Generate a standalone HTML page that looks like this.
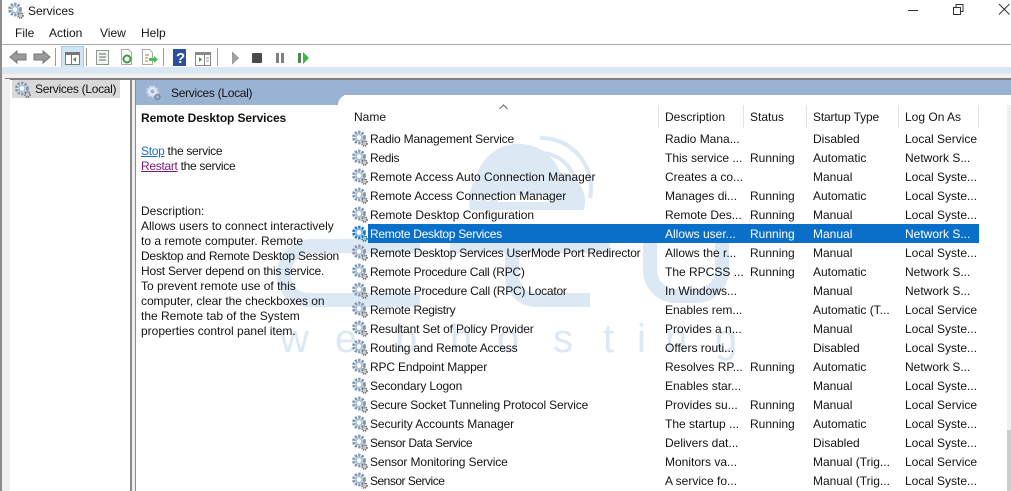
<!DOCTYPE html>
<html><head><meta charset="utf-8"><style>
html,body{margin:0;padding:0}
body{width:1011px;height:491px;overflow:hidden;background:#fff;position:relative;font-family:"Liberation Sans",sans-serif;font-size:12px;color:#141414}
.a{position:absolute;white-space:nowrap}
.r{position:absolute;left:0;width:1011px;height:19px;line-height:19px}
.r span{position:absolute;top:0;white-space:nowrap}
.r svg{position:absolute;left:351px;top:0}
.n{left:370px}.d{left:665px}.s{left:750px}.t{left:813px}.l{left:905px}
.sel{color:#fff}
.h{position:absolute;top:108px;line-height:18px}
.sep{position:absolute;top:105px;width:1px;height:23px;background:#e3e3e3}
.ts{position:absolute;top:48px;width:1px;height:18px;background:#9a9a9a}
.p{position:absolute;line-height:15px;left:141px}
</style></head><body>
<svg width="0" height="0" style="position:absolute"><defs>
<g id="g"><circle cx="8" cy="7.500" r="5.400" fill="#dbe6f2" stroke="#7f97b3" stroke-width="3" stroke-dasharray="2.200 1.300"/><circle cx="8" cy="7.500" r="2.900" fill="#fff" stroke="#9cb0c6"/><circle cx="13.500" cy="13.500" r="2.500" fill="#ccc" stroke="#6f6f6f" stroke-width="1.600" stroke-dasharray="1.300 .8"/></g>
<g id="gs"><circle cx="8" cy="7.500" r="5.400" fill="#bcd7f0" stroke="#1f78c8" stroke-width="3" stroke-dasharray="2.200 1.300"/><circle cx="8" cy="7.500" r="2.900" fill="#fff" stroke="#7ab0e0"/><circle cx="13.500" cy="13.500" r="2.500" fill="#9cc" stroke="#2a70b0" stroke-width="1.600" stroke-dasharray="1.300 .8"/></g>
</defs></svg>

<!-- window chrome -->
<div class="a" style="left:0;top:0;width:2px;height:491px;background:#8c8c8c"></div>
<svg class="a" style="left:7px;top:2px" width="18" height="18"><use href="#g"/></svg>
<div class="a" style="left:28px;top:3px;line-height:16px">Services</div>
<svg class="a" style="left:905px;top:0" width="106" height="20" fill="none" stroke="#333">
<path d="M3 10.500 H13"/>
<rect x="48.500" y="7.500" width="7" height="7"/><path d="M51 7.500 V4.500 H58 V11.500 H55.500"/>
<path d="M94 4 L104.500 14.500 M104.500 4 L94 14.500"/></svg>
<div class="a" style="left:15px;top:25px;line-height:16px">File</div>
<div class="a" style="left:49px;top:25px;line-height:16px">Action</div>
<div class="a" style="left:100px;top:25px;line-height:16px">View</div>
<div class="a" style="left:141px;top:25px;line-height:16px">Help</div>
<div class="a" style="left:2px;top:44px;width:1009px;height:1px;background:#a9a9a9"></div>

<!-- toolbar -->
<svg class="a" style="left:0;top:45px" width="340" height="23">
<path d="M10 12 l7 -6 v3 h9 v6 h-9 v3 z" fill="#9a9a9a" stroke="#777"/>
<path d="M50 12 l-7 -6 v3 h-9 v6 h9 v3 z" fill="#9a9a9a" stroke="#777"/>
<rect x="61.500" y="1.500" width="22" height="21" fill="#cfe4f7" stroke="#a5cdee"/>
<rect x="65.500" y="7.500" width="14" height="12" fill="#fff" stroke="#777"/><rect x="65" y="7" width="15" height="3" fill="#777"/><path d="M76 12 l-3 2.500 3 2.500z" fill="#3a9a3a"/><path d="M71.500 10 v9" stroke="#777"/>
<rect x="96.500" y="5.500" width="12" height="14" fill="#f2f6f2" stroke="#8a9a8a"/><path d="M99 9 h7 M99 12 h7 M99 15 h7" stroke="#667"/>
<path d="M121.500 4.500 h7 l3 3 v12 h-10z" fill="#fff" stroke="#aaa"/><circle cx="127" cy="14" r="3.500" fill="none" stroke="#3d9a3d" stroke-width="2"/>
<path d="M142.500 4.500 h7 l3 3 v12 h-10z" fill="#fff" stroke="#aaa"/><path d="M145 10 h4 M145 13 h3 M145 16 h3" stroke="#b57a2a"/><path d="M149 13 h5 v-2 l4 3.500 -4 3.500 v-2 h-5z" fill="#4fc04f"/>
<rect x="173" y="4" width="13" height="17" fill="#2c4f9e"/><text x="176" y="18" font-family="Liberation Sans" font-weight="bold" font-size="15" fill="#fff">?</text>
<rect x="195.500" y="7.500" width="15" height="13" fill="#fff" stroke="#888"/><rect x="195" y="7" width="16" height="3" fill="#888"/><path d="M199 12 l3 2.500 -3 2.500z" fill="#3a9a3a"/><path d="M204.500 10 v10 M206 13 h3 M206 16 h3" stroke="#888"/>
<path d="M232.500 7.500 l6 5.500 -6 5.500z" fill="#a5a5a5" stroke="#999"/>
<rect x="252" y="8" width="10" height="10" rx="1" fill="#4a4a4a"/>
<rect x="276" y="8" width="3" height="10" fill="#808080"/><rect x="281" y="8" width="3" height="10" fill="#808080"/>
<rect x="298" y="8" width="3" height="10" fill="#4c8a4c"/><path d="M303 7 l6 6 -6 6z" fill="#39b54a"/>
</svg>
<div class="ts" style="left:55px"></div><div class="ts" style="left:86px"></div><div class="ts" style="left:163px"></div><div class="ts" style="left:217px"></div>
<div class="a" style="left:2px;top:67px;width:1009px;height:7px;background:#dbe7f3"></div>
<div class="a" style="left:2px;top:74px;width:1009px;height:5px;background:#f2efec"></div>
<div class="a" style="left:5px;top:78px;width:1006px;height:2px;background:#7e7e82"></div>
<div class="a" style="left:2px;top:79px;width:8px;height:412px;background:#f0f0f0"></div>

<!-- left tree -->
<div class="a" style="left:10px;top:80px;width:120px;height:411px;background:#fff"></div>
<div class="a" style="left:12px;top:80px;width:108px;height:18px;background:#d9d9d9"></div>
<svg class="a" style="left:14px;top:81px" width="18" height="18"><use href="#g"/></svg>
<div class="a" style="left:35px;top:81px;line-height:16px;letter-spacing:-.3px">Services (Local)</div>
<div class="a" style="left:130px;top:80px;width:2px;height:411px;background:#8a8a8a"></div>
<div class="a" style="left:132px;top:80px;width:3px;height:411px;background:#f0f0f0"></div>
<div class="a" style="left:135px;top:80px;width:1px;height:411px;background:#8a8a8a"></div>

<!-- header band -->
<div class="a" style="left:136px;top:80px;width:875px;height:15px;background:#9ab3d3"></div>
<div class="a" style="left:136px;top:95px;width:208px;height:10px;background:#9ab3d3"></div>
<div class="a" style="left:338px;top:95px;width:673px;height:396px;background:#fff;border-top-left-radius:10px"></div>
<svg class="a" style="left:145px;top:84px" width="18" height="18"><circle cx="7.500" cy="7.500" r="5" fill="#dfe8f2" stroke="#c8d6e6" stroke-width="2.600" stroke-dasharray="2 1.400"/><circle cx="7.500" cy="7.500" r="2.600" fill="#9ab3d3" stroke="#eef"/><circle cx="12.500" cy="13" r="2.400" fill="none" stroke="#7a8a9c" stroke-width="1.500"/></svg>
<div class="a" style="left:171px;top:85px;line-height:16px;letter-spacing:-.3px">Services (Local)</div>

<!-- watermark -->
<svg class="a" style="left:0;top:0" width="1011" height="491">
<g fill="#dce8f4"><path d="M470 210 a40 42 0 0 1 6 -32 a44 44 0 0 1 84 -6 a30 30 0 0 1 24 38 z"/></g>
<g fill="#fff"><circle cx="478" cy="198" r="3"/><circle cx="488" cy="198" r="3"/><rect x="498" y="195" width="50" height="7"/></g>
<g fill="none" stroke="#dce8f4" stroke-width="4"><path d="M540 138 a50 50 0 0 1 50 60"/><path d="M540 153 a36 36 0 0 1 36 40"/></g>
<g fill="none" stroke="#dce8f4" stroke-width="14">
<path d="M420 246 H312 a28 28 0 0 0 -28 28 v2 a24 24 0 0 0 24 24 H420"/>
<path d="M512 240 v36 a24 24 0 0 0 24 24 H590"/>
<path d="M450 246 H610"/>
<path d="M650 240 v30 a26 26 0 0 0 26 26 h20 a26 26 0 0 0 26 -26 v-30"/>
</g>
<text x="280 335 395 450 497 553 603 637 665 715" y="352" font-family="Liberation Sans" font-size="40" fill="#dce8f4">webhosting</text>
</svg>

<!-- description -->
<div class="p" style="top:111px;font-weight:bold;color:#111;letter-spacing:-.1px">Remote Desktop Services</div>
<div class="p" style="top:144px;letter-spacing:-.3px"><span style="color:#1a6fc0;text-decoration:underline">Stop</span> the service</div>
<div class="p" style="top:159px;letter-spacing:-.3px"><span style="color:#7a1a7a;text-decoration:underline">Restart</span> the service</div>
<div class="p" style="top:204px">Description:<br>Allows users to connect interactively<br>to a remote computer. Remote<br><span style="letter-spacing:-.24px">Desktop and Remote Desktop Session</span><br><span style="letter-spacing:-.2px">Host Server depend on this service.</span><br>To prevent remote use of this<br><span style="letter-spacing:-.06px">computer, clear the checkboxes on</span><br>the Remote tab of the System<br>properties control panel item.</div>

<!-- list header -->
<div class="h" style="left:354px">Name</div>
<div class="h" style="left:665px">Description</div>
<div class="h" style="left:750px">Status</div>
<div class="h" style="left:813px;letter-spacing:-.15px">Startup Type</div>
<div class="h" style="left:905px">Log On As</div>
<div class="sep" style="left:658px"></div><div class="sep" style="left:743px"></div><div class="sep" style="left:806px"></div><div class="sep" style="left:898px"></div><div class="sep" style="left:978px"></div>
<svg class="a" style="left:498px;top:103px" width="12" height="8" fill="none" stroke="#666"><path d="M1.500 6 L5.500 2 L9.500 6"/></svg>

<!-- selected row -->
<div class="a" style="left:368px;top:224px;width:611px;height:19px;background:#0a6fc8"></div>

<!-- rows -->
<div class="r" style="top:130px"><svg width="18" height="18"><use href="#g"/></svg><span class="n" style="letter-spacing:-.17px">Radio Management Service</span><span class="d">Radio Mana...</span><span class="t">Disabled</span><span class="l">Local Service</span></div>
<div class="r" style="top:149px"><svg width="18" height="18"><use href="#g"/></svg><span class="n" style="letter-spacing:-.3px">Redis</span><span class="d">This service ...</span><span class="s">Running</span><span class="t">Automatic</span><span class="l">Network S...</span></div>
<div class="r" style="top:168px"><svg width="18" height="18"><use href="#g"/></svg><span class="n">Remote Access Auto Connection Manager</span><span class="d">Creates a co...</span><span class="t">Manual</span><span class="l">Local Syste...</span></div>
<div class="r" style="top:187px"><svg width="18" height="18"><use href="#g"/></svg><span class="n" style="letter-spacing:-.06px">Remote Access Connection Manager</span><span class="d">Manages di...</span><span class="s">Running</span><span class="t">Automatic</span><span class="l">Local Syste...</span></div>
<div class="r" style="top:206px"><svg width="18" height="18"><use href="#g"/></svg><span class="n">Remote Desktop Configuration</span><span class="d">Remote Des...</span><span class="s">Running</span><span class="t">Manual</span><span class="l">Local Syste...</span></div>
<div class="r sel" style="top:225px"><svg width="18" height="18"><use href="#gs"/></svg><span class="n" style="letter-spacing:-.3px">Remote Desktop Services</span><span class="d">Allows user...</span><span class="s">Running</span><span class="t">Manual</span><span class="l">Network S...</span></div>
<div class="r" style="top:244px"><svg width="18" height="18"><use href="#g"/></svg><span class="n" style="letter-spacing:-.23px">Remote Desktop Services UserMode Port Redirector</span><span class="d">Allows the r...</span><span class="s">Running</span><span class="t">Manual</span><span class="l">Local Syste...</span></div>
<div class="r" style="top:263px"><svg width="18" height="18"><use href="#g"/></svg><span class="n" style="letter-spacing:-.25px">Remote Procedure Call (RPC)</span><span class="d">The RPCSS ...</span><span class="s">Running</span><span class="t">Automatic</span><span class="l">Network S...</span></div>
<div class="r" style="top:282px"><svg width="18" height="18"><use href="#g"/></svg><span class="n" style="letter-spacing:-.23px">Remote Procedure Call (RPC) Locator</span><span class="d">In Windows...</span><span class="t">Manual</span><span class="l">Network S...</span></div>
<div class="r" style="top:301px"><svg width="18" height="18"><use href="#g"/></svg><span class="n" style="letter-spacing:-.27px">Remote Registry</span><span class="d">Enables rem...</span><span class="t">Automatic (T...</span><span class="l">Local Service</span></div>
<div class="r" style="top:320px"><svg width="18" height="18"><use href="#g"/></svg><span class="n" style="letter-spacing:-.16px">Resultant Set of Policy Provider</span><span class="d">Provides a n...</span><span class="t">Manual</span><span class="l">Local Syste...</span></div>
<div class="r" style="top:339px"><svg width="18" height="18"><use href="#g"/></svg><span class="n" style="letter-spacing:-.16px">Routing and Remote Access</span><span class="d">Offers routi...</span><span class="t">Disabled</span><span class="l">Local Syste...</span></div>
<div class="r" style="top:358px"><svg width="18" height="18"><use href="#g"/></svg><span class="n" style="letter-spacing:-.16px">RPC Endpoint Mapper</span><span class="d">Resolves RP...</span><span class="s">Running</span><span class="t">Automatic</span><span class="l">Network S...</span></div>
<div class="r" style="top:377px"><svg width="18" height="18"><use href="#g"/></svg><span class="n" style="letter-spacing:-.13px">Secondary Logon</span><span class="d">Enables star...</span><span class="t">Manual</span><span class="l">Local Syste...</span></div>
<div class="r" style="top:396px"><svg width="18" height="18"><use href="#g"/></svg><span class="n" style="letter-spacing:-.15px">Secure Socket Tunneling Protocol Service</span><span class="d">Provides su...</span><span class="s">Running</span><span class="t">Manual</span><span class="l">Local Service</span></div>
<div class="r" style="top:415px"><svg width="18" height="18"><use href="#g"/></svg><span class="n" style="letter-spacing:-.08px">Security Accounts Manager</span><span class="d">The startup ...</span><span class="s">Running</span><span class="t">Automatic</span><span class="l">Local Syste...</span></div>
<div class="r" style="top:434px"><svg width="18" height="18"><use href="#g"/></svg><span class="n" style="letter-spacing:-.42px">Sensor Data Service</span><span class="d">Delivers dat...</span><span class="t">Disabled</span><span class="l">Local Syste...</span></div>
<div class="r" style="top:453px"><svg width="18" height="18"><use href="#g"/></svg><span class="n" style="letter-spacing:-.12px">Sensor Monitoring Service</span><span class="d">Monitors va...</span><span class="t">Manual (Trig...</span><span class="l">Local Service</span></div>
<div class="r" style="top:472px"><svg width="18" height="18"><use href="#g"/></svg><span class="n" style="letter-spacing:-.5px">Sensor Service</span><span class="d">A service fo...</span><span class="t">Manual (Trig...</span><span class="l">Local Syste...</span></div>

<!-- scrollbar -->
<div class="a" style="left:1007px;top:105px;width:4px;height:325px;background:#f0f0f0"></div>
<div class="a" style="left:1007px;top:430px;width:4px;height:61px;background:#cdcdcd"></div>
</body></html>
